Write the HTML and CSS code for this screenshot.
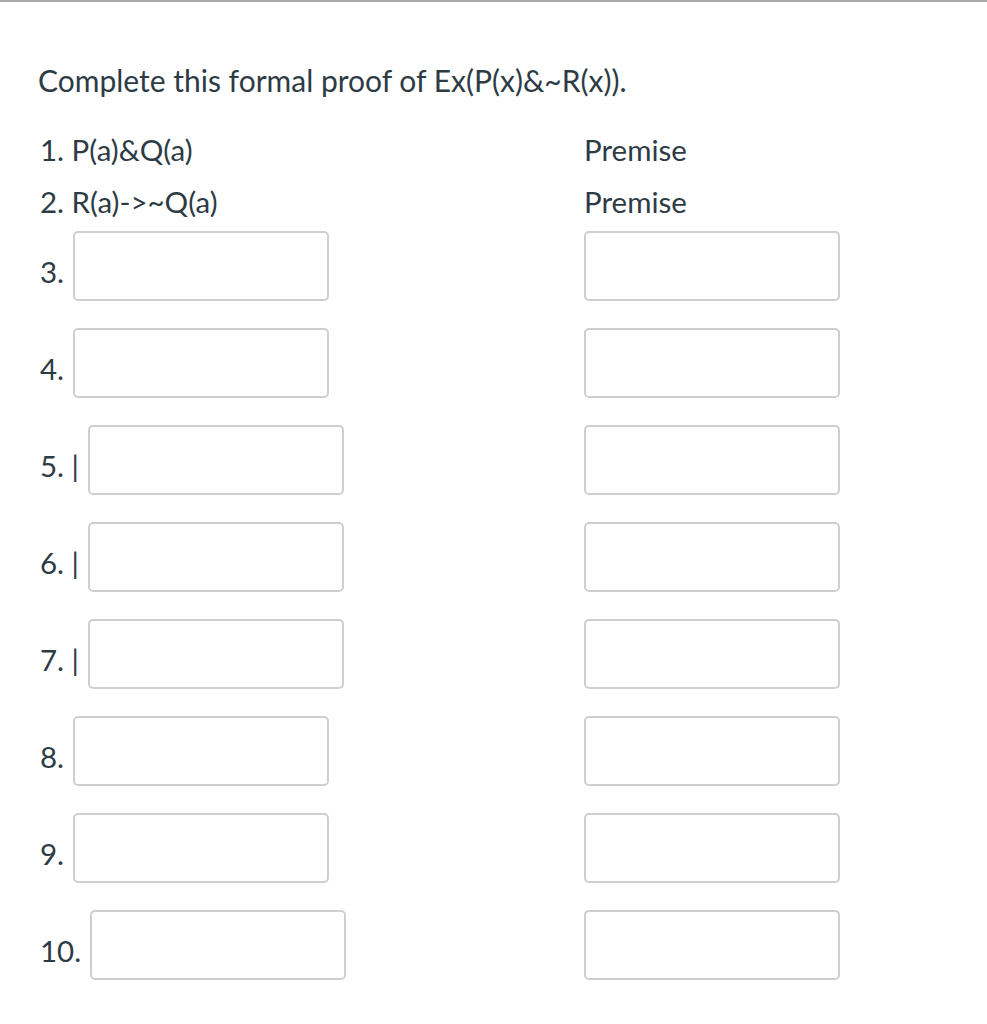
FILE: index.html
```html
<!DOCTYPE html>
<html>
<head>
<meta charset="utf-8">
<link rel="stylesheet" href="styles.css">
</head>
<body>
<div class="page">
  <p class="question">Complete this formal proof of Ex(P(x)&amp;~R(x)).</p>
  <div class="proof">
    <div class="line">
      <div class="left">1. P(a)&amp;Q(a)</div>
      <div class="right">Premise</div>
    </div>
    <div class="line">
      <div class="left">2. R(a)-&gt;~Q(a)</div>
      <div class="right">Premise</div>
    </div>
    <div class="line boxed">
      <div class="left"><span class="num">3.</span><input class="box" type="text"></div>
      <div class="right"><input class="box" type="text"></div>
    </div>
    <div class="line boxed">
      <div class="left"><span class="num">4.</span><input class="box" type="text"></div>
      <div class="right"><input class="box" type="text"></div>
    </div>
    <div class="line boxed">
      <div class="left"><span class="num">5. |</span><input class="box" type="text"></div>
      <div class="right"><input class="box" type="text"></div>
    </div>
    <div class="line boxed">
      <div class="left"><span class="num">6. |</span><input class="box" type="text"></div>
      <div class="right"><input class="box" type="text"></div>
    </div>
    <div class="line boxed">
      <div class="left"><span class="num">7. |</span><input class="box" type="text"></div>
      <div class="right"><input class="box" type="text"></div>
    </div>
    <div class="line boxed">
      <div class="left"><span class="num">8.</span><input class="box" type="text"></div>
      <div class="right"><input class="box" type="text"></div>
    </div>
    <div class="line boxed">
      <div class="left"><span class="num">9.</span><input class="box" type="text"></div>
      <div class="right"><input class="box" type="text"></div>
    </div>
    <div class="line boxed">
      <div class="left"><span class="num">10.</span><input class="box" type="text"></div>
      <div class="right"><input class="box" type="text"></div>
    </div>
  </div>
</div>
</body>
</html>
```

FILE: styles.css
```css
html, body {
  margin: 0;
  padding: 0;
  background: #ffffff;
}

body {
  font-family: Lato, "Noto Sans", sans-serif;
  color: #2d3b45;
}

.page {
  border-top: 2px solid #a9a9a9;
  padding: 62px 0 0 40px;
}

.question {
  margin: 0 0 28px -2px;
  font-size: 30px;
  line-height: 32px;
}

.proof {
  display: flex;
  flex-direction: column;
}

.line {
  display: grid;
  grid-template-columns: 544px 256px;
  font-size: 29.5px;
  line-height: 52px;
}

.line.boxed {
  margin-top: 27px;
}

.line:nth-child(3) {
  margin-top: 3px;
}

.left {
  display: flex;
  align-items: center;
}

.num {
  padding-top: 12px;
  margin-right: 8.5px;
}

.box {
  box-sizing: border-box;
  width: 256px;
  height: 70px;
  margin: 0;
  border: 2px solid #cfcfcf;
  border-radius: 5px;
  background: #fff;
  outline: none;
}

.right {
  display: flex;
  align-items: center;
}
```
